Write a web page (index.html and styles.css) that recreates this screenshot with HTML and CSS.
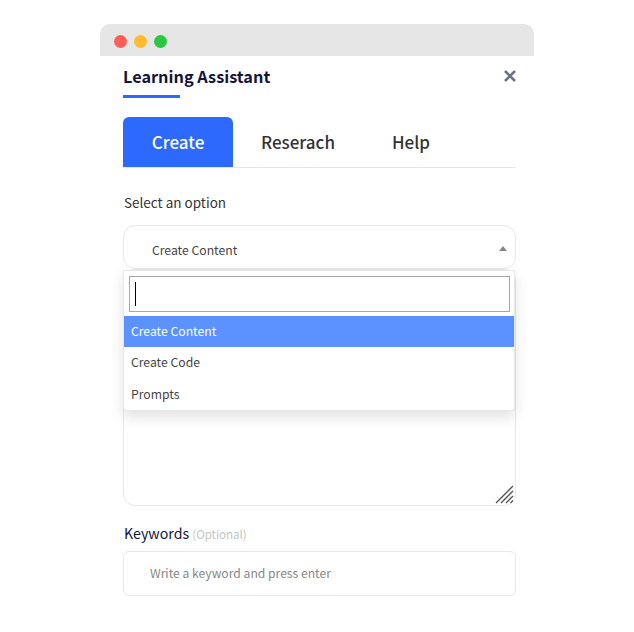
FILE: index.html
```html
<!DOCTYPE html>
<html lang="en">
<head>
    <meta charset="UTF-8">
    <title>Learning Assistant</title>
    <link rel="stylesheet" href="styles.css">
</head>
<body>
    <div class="window">
        <div class="titlebar">
            <span class="dot dot-red"></span>
            <span class="dot dot-yellow"></span>
            <span class="dot dot-green"></span>
        </div>
        <div class="content">
            <div class="header">
                <h1>Learning Assistant</h1>
                <svg class="close" width="14" height="14" viewBox="0 0 14 14">
                    <path d="M2 2L12 12M12 2L2 12" stroke="#6b7280" stroke-width="2.6" fill="none"/>
                </svg>
            </div>
            <div class="underline"></div>

            <div class="tabs">
                <div class="tab tab-active">Create</div>
                <div class="tab tab-research">Reserach</div>
                <div class="tab tab-help">Help</div>
            </div>

            <label class="field-label">Select an option</label>
            <div class="select-wrap">
                <div class="select">
                    <span>Create Content</span>
                    <span class="arrow"></span>
                </div>
                <div class="dropdown">
                    <div class="search"><span class="caret"></span></div>
                    <ul class="options">
                        <li class="option option-active">Create Content</li>
                        <li class="option">Create Code</li>
                        <li class="option option-last">Prompts</li>
                    </ul>
                </div>
            </div>

            <div class="textarea">
                <svg class="grip" width="19" height="19" viewBox="0 0 19 19">
                    <path d="M1 18L18 1M6 18L18 6M11 18L18 11M15.5 18L18 15.5" stroke="#555" stroke-width="1.4" fill="none"/>
                </svg>
            </div>

            <label class="field-label keywords-label">Keywords <span class="optional">(Optional)</span></label>
            <div class="keywords">Write a keyword and press enter</div>
        </div>
    </div>
</body>
</html>
```

FILE: styles.css
```css
body {
    margin: 0;
    padding: 24px 100px 0;
    height: 632px;
    box-sizing: border-box;
    overflow: hidden;
    background: #fff;
    font-family: "Noto Sans CJK SC", "Noto Sans", sans-serif;
    color: #333;
}

.window {
    width: 434px;
}

.titlebar {
    height: 32px;
    background-color: #e6e6e6;
    border-radius: 10px 10px 0 0;
    display: flex;
    align-items: center;
    gap: 7px;
    padding: 2px 0 0 14px;
    box-sizing: border-box;
}

.dot {
    width: 13px;
    height: 13px;
    border-radius: 50%;
}

.dot-red { background-color: #ff5f57; }
.dot-yellow { background-color: #febc2e; }
.dot-green { background-color: #28c840; }

.content {
    padding: 0 18px 0 23px;
}

.header {
    display: flex;
    justify-content: space-between;
    align-items: center;
    height: 39px;
}

h1 {
    margin: 0;
    font-size: 16.3px;
    font-weight: 700;
    color: #14143c;
}

.close {
    margin-right: -1px;
}

.underline {
    width: 57px;
    height: 3px;
    background-color: #2d68ff;
}

.tabs {
    display: flex;
    height: 50px;
    margin-top: 19px;
    border-bottom: 1px solid #e6e6e6;
}

.tab {
    font-size: 17px;
    font-weight: 500;
    line-height: 50px;
    color: #333;
}

.tab-active {
    width: 110px;
    text-align: center;
    background-color: #2d68ff;
    color: #fff;
    border-radius: 6px 6px 0 0;
}

.tab-research {
    margin-left: 28px;
}

.tab-help {
    margin-left: 57px;
}

.field-label {
    display: block;
    font-size: 13.5px;
    line-height: 20px;
    margin: 24px 0 0 1px;
    color: #333;
}

.select-wrap {
    position: relative;
    margin-top: 13px;
}

.select {
    height: 44px;
    border: 1px solid #e8e8e8;
    border-radius: 12px;
    box-sizing: border-box;
    display: flex;
    justify-content: space-between;
    align-items: center;
    padding: 6px 8px 0 28px;
    font-size: 12.2px;
    color: #444;
}

.arrow {
    width: 0;
    height: 0;
    border-left: 4px solid transparent;
    border-right: 4px solid transparent;
    border-bottom: 5px solid #888;
    margin-bottom: 4px;
}

.dropdown {
    position: absolute;
    top: 45px;
    left: 0;
    width: 392px;
    box-sizing: border-box;
    background: #fff;
    border: 1px solid #e6e6e6;
    border-radius: 0 0 4px 4px;
    box-shadow: 0 6px 14px rgba(0, 0, 0, 0.12);
    z-index: 2;
}

.search {
    height: 36px;
    margin: 5px 4px 4px 5px;
    border: 1px solid #a6a6a6;
    box-sizing: border-box;
    padding: 5px 0 0 5px;
}

.caret {
    display: block;
    width: 1px;
    height: 24px;
    background-color: #000;
}

.options {
    list-style: none;
    margin: 0;
    padding: 0;
}

.option {
    height: 32px;
    line-height: 31px;
    padding-left: 7px;
    font-size: 12.2px;
    color: #444;
}

.option-active {
    height: 31px;
    background-color: #5b92ff;
    color: #fff;
}

.option-last {
    height: 31px;
}

.textarea {
    position: relative;
    height: 237px;
    border: 1px solid #e8e8e8;
    border-radius: 12px;
    box-sizing: border-box;
}

.grip {
    position: absolute;
    right: 1px;
    bottom: 1px;
}

.keywords-label {
    font-size: 14.2px;
    margin-top: 17px;
    color: #14143c;
}

.optional {
    font-size: 11.5px;
    color: #c4c4c4;
}

.keywords {
    height: 45px;
    margin-top: 7px;
    border: 1px solid #e8e8e8;
    border-radius: 6px;
    box-sizing: border-box;
    padding-left: 26px;
    font-size: 12.15px;
    line-height: 41px;
    color: #888;
}
```
